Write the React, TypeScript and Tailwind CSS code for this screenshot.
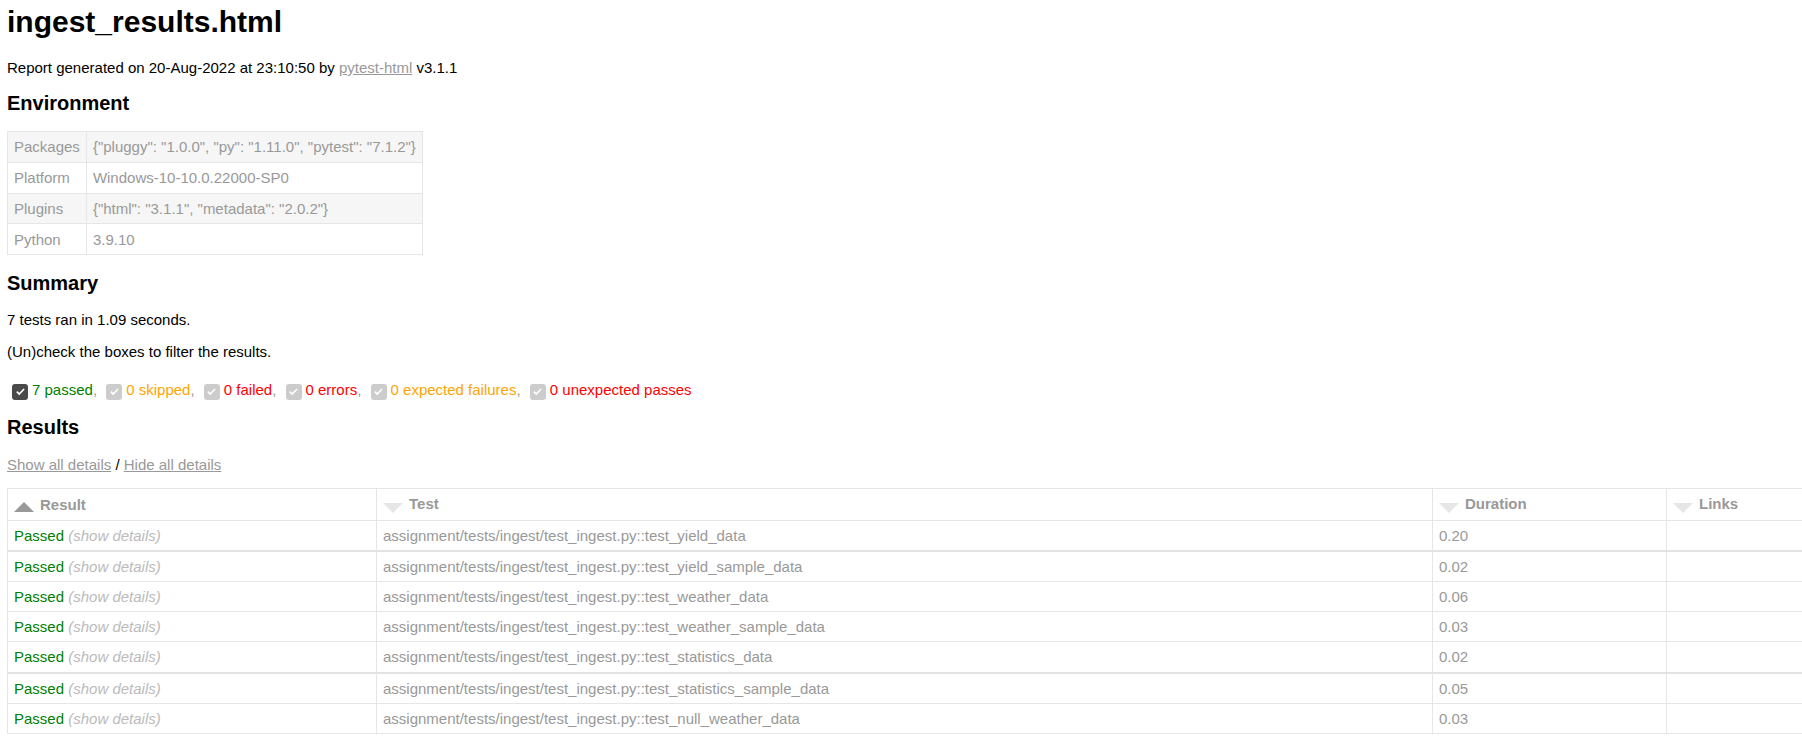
import React from "react";

const ENV = [
  ["Packages", '{"pluggy": "1.0.0", "py": "1.11.0", "pytest": "7.1.2"}'],
  ["Platform", "Windows-10-10.0.22000-SP0"],
  ["Plugins", '{"html": "3.1.1", "metadata": "2.0.2"}'],
  ["Python", "3.9.10"],
];

const RESULTS = [
  { name: "test_yield_data", duration: "0.20", thick: true },
  { name: "test_yield_sample_data", duration: "0.02" },
  { name: "test_weather_data", duration: "0.06" },
  { name: "test_weather_sample_data", duration: "0.03" },
  { name: "test_statistics_data", duration: "0.02", thick: true },
  { name: "test_statistics_sample_data", duration: "0.05" },
  { name: "test_null_weather_data", duration: "0.03" },
];

function CheckBox({ active }: { active?: boolean }) {
  return (
    <span
      className={`inline-flex items-center justify-center w-[16px] h-[16px] rounded-[3px] align-[-3px] ml-[5px] mr-[4px] ${
        active ? "bg-[#4a4a4a]" : "bg-[#cccccc]"
      }`}
    >
      <svg viewBox="0 0 16 16" className="w-[13px] h-[13px]">
        <path d="M3.5 8.2l2.9 2.9 6-6.2" stroke="white" strokeWidth="2" fill="none" />
      </svg>
    </span>
  );
}

function SortIcon({ active }: { active?: boolean }) {
  if (active) {
    return (
      <span className="float-left w-0 h-0 mt-[6px] mr-[6px] border-x-[10px] border-x-transparent border-b-[10px] border-b-[#999]" />
    );
  }
  return (
    <span className="float-left w-0 h-0 mt-[8px] mr-[6px] border-x-[10px] border-x-transparent border-t-[10px] border-t-[#e6e6e6]" />
  );
}

function Filter({ label, color, active, last }: { label: string; color: string; active?: boolean; last?: boolean }) {
  return (
    <>
      <CheckBox active={active} />
      <span className={color}>{label}</span>
      {!last && ", "}
    </>
  );
}

export default function App() {
  return (
    <div className="min-h-screen overflow-hidden bg-white px-[7px] pt-[5px] font-['Liberation_Sans',Arial,sans-serif] text-[15px] text-[#999]">
      <h1 className="text-[30px] font-bold leading-[34px] text-black">ingest_results.html</h1>
      <p className="mt-[20px] leading-[17px] text-black">
        Report generated on 20-Aug-2022 at 23:10:50 by{" "}
        <a className="text-[#999] underline">pytest-html</a> v3.1.1
      </p>

      <h2 className="mt-[16px] text-[20px] font-bold leading-[23px] text-black">Environment</h2>
      <table className="mt-[16px] border-collapse">
        <tbody>
          {ENV.map(([k, v], i) => (
            <tr key={k} className={i % 2 === 0 ? "bg-[#f6f6f6]" : ""}>
              <td className="border border-[#e6e6e6] px-[6px] py-[6.4px] leading-[17px]">{k}</td>
              <td className="border border-[#e6e6e6] px-[6px] py-[6.4px] leading-[17px]">{v}</td>
            </tr>
          ))}
        </tbody>
      </table>

      <h2 className="mt-[17px] text-[20px] font-bold leading-[23px] text-black">Summary</h2>
      <p className="mt-[16px] leading-[17px] text-black">7 tests ran in 1.09 seconds.</p>
      <p className="mt-[15px] leading-[17px] text-black">(Un)check the boxes to filter the results.</p>
      <div className="mt-[18px] leading-[24px]">
        <Filter label="7 passed" color="text-[#008000]" active />
        <Filter label="0 skipped" color="text-[#ffa500]" />
        <Filter label="0 failed" color="text-[#ff0000]" />
        <Filter label="0 errors" color="text-[#ff0000]" />
        <Filter label="0 expected failures" color="text-[#ffa500]" />
        <Filter label="0 unexpected passes" color="text-[#ff0000]" last />
      </div>

      <h2 className="mt-[14px] text-[20px] font-bold leading-[23px] text-black">Results</h2>
      <p className="mt-[17px] leading-[17px] text-black">
        <a className="text-[#999] underline">Show all details</a>&nbsp;/&nbsp;
        <a className="text-[#999] underline">Hide all details</a>
      </p>

      <table className="mt-[15px] w-[1800px] table-fixed border-collapse text-left">
        <colgroup>
          <col className="w-[369px]" />
          <col className="w-[1056px]" />
          <col className="w-[234px]" />
          <col />
        </colgroup>
        <thead>
          <tr>
            <th className="border border-[#e6e6e6] px-[6px] py-[6.25px] font-bold leading-[17px]">
              <SortIcon active />
              Result
            </th>
            <th className="border border-[#e6e6e6] px-[6px] py-[6.25px] font-bold leading-[17px]">
              <SortIcon />
              Test
            </th>
            <th className="border border-[#e6e6e6] px-[6px] py-[6.25px] font-bold leading-[17px]">
              <SortIcon />
              Duration
            </th>
            <th className="border border-[#e6e6e6] px-[6px] py-[6.25px] font-bold leading-[17px]">
              <SortIcon />
              Links
            </th>
          </tr>
        </thead>
        <tbody>
          {RESULTS.map((r) => (
            <tr key={r.name} className={r.thick ? "border-b-2 border-b-[#e2e2e2]" : ""}>
              <td className="border border-[#e6e6e6] px-[6px] py-[6.1px] leading-[17px]">
                <span className="text-[#008000]">Passed</span>{" "}
                <span className="italic text-[#bbb]">(show details)</span>
              </td>
              <td className="border border-[#e6e6e6] px-[6px] py-[6.1px] leading-[17px]">
                assignment/tests/ingest/test_ingest.py::{r.name}
              </td>
              <td className="border border-[#e6e6e6] px-[6px] py-[6.1px] leading-[17px]">{r.duration}</td>
              <td className="border border-[#e6e6e6] px-[6px] py-[6.1px] leading-[17px]"></td>
            </tr>
          ))}
        </tbody>
      </table>
    </div>
  );
}
